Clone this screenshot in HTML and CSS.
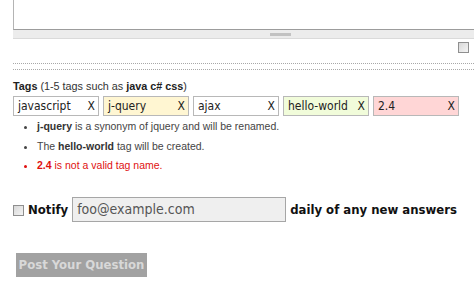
FILE: index.html
```html
<!DOCTYPE html>
<html lang="en">

<head>
  <meta charset="UTF-8" />
  <title>Ask Question</title>
  <link rel="stylesheet" href="styles.css">
</head>

<body>
  <div class="page">

    <div class="editor">
      <textarea class="editor-input"></textarea>
      <div class="grippie"><span class="grip-handle"></span></div>
    </div>

    <div class="options">
      <input type="checkbox" class="box small-box">
    </div>

    <div class="preview"></div>

    <p class="tags-label"><strong>Tags</strong> (1-5 tags such as <strong>java c# css</strong>)</p>

    <div class="tag-row">
      <div class="tag">javascript<span class="tag-x">X</span></div>
      <div class="tag tag-synonym">j-query<span class="tag-x">X</span></div>
      <div class="tag">ajax<span class="tag-x">X</span></div>
      <div class="tag tag-new">hello-world<span class="tag-x">X</span></div>
      <div class="tag tag-invalid">2.4<span class="tag-x">X</span></div>
    </div>

    <ul class="tag-notes">
      <li><strong>j-query</strong> is a synonym of jquery and will be renamed.</li>
      <li>The <strong>hello-world</strong> tag will be created.</li>
      <li class="note-error"><strong>2.4</strong> is not a valid tag name.</li>
    </ul>

    <div class="notify-row">
      <input type="checkbox" class="box">
      <span class="notify-text">Notify</span>
      <input type="text" class="email" value="foo@example.com">
      <span class="notify-text">daily of any new answers</span>
    </div>

    <button class="post-btn" disabled>Post Your Question</button>

  </div>
</body>

</html>
```

FILE: styles.css
```css
body {
  margin: 0;
  overflow: hidden;
  background: white;
  font-family: "Liberation Sans", Arial, sans-serif;
  color: #222;
}

.page {
  padding-left: 13px;
}

/* textarea with its resize grip, cut off at the right edge */
.editor-input {
  display: block;
  box-sizing: border-box;
  width: 100%;
  height: 30px;
  margin: 0;
  border: 1px solid #b4b4b4;
  border-top: 0;
  border-right: 0;
  border-bottom-color: #9c9c9c;
  resize: none;
  background: white;
}

.grippie {
  height: 8px;
  background: #ececec;
  border-bottom: 1px solid #dadada;
  display: flex;
  justify-content: center;
  align-items: center;
}

.grip-handle {
  width: 21px;
  height: 3px;
  margin-left: 74px;
  background: #c2c2c2;
}

.options {
  display: flex;
  justify-content: flex-end;
  padding-right: 5px;
  margin-top: 3px;
}

.box {
  appearance: none;
  -webkit-appearance: none;
  box-sizing: border-box;
  width: 11px;
  height: 11px;
  margin: 0;
  border: 1px solid #8f8f8f;
  background: linear-gradient(135deg, #d8d8d8, #f4f4f4);
}

.preview {
  margin-top: 10px;
  height: 5px;
  border-top: 1px dotted #a8a8a8;
  border-bottom: 1px dotted #a8a8a8;
}

.tags-label {
  margin: 9px 0 0;
  font-size: 10.8px;
  line-height: 14px;
  color: #333;
}

.tags-label strong {
  color: #222;
}

.tag-row {
  display: flex;
  gap: 4px;
  margin-top: 3px;
}

.tag {
  box-sizing: border-box;
  width: 86px;
  height: 20px;
  display: flex;
  justify-content: space-between;
  align-items: center;
  padding: 0 3px 0 4px;
  border: 1px solid #b8b8b8;
  background: white;
  font-family: "DejaVu Sans Condensed", "DejaVu Sans", sans-serif;
  font-size: 12px;
  color: #222;
}

.tag-x {
  font-size: 12px;
}

.tag-synonym {
  background: #fff6d2;
}

.tag-new {
  background: #f1fcda;
}

.tag-invalid {
  background: #ffd6d6;
}

.tag-notes {
  margin: 1px 0 0;
  padding-left: 24px;
  font-size: 10.5px;
  line-height: 19.5px;
  color: #444;
}

.tag-notes strong {
  color: #333;
}

.tag-notes .note-error,
.tag-notes .note-error strong {
  color: #e01010;
}

.notify-row {
  display: flex;
  align-items: center;
  gap: 4px;
  margin-top: 21px;
}

.notify-row .box {
  margin-top: 2px;
}

.notify-text {
  font-family: "DejaVu Sans Condensed", "DejaVu Sans", sans-serif;
  font-weight: bold;
  font-size: 13px;
  color: #111;
}

.email {
  box-sizing: border-box;
  width: 214px;
  height: 25px;
  margin: 0;
  padding: 0 4px;
  border: 1px solid #a6a6a6;
  background: #efefef;
  font-family: "DejaVu Sans Condensed", "DejaVu Sans", sans-serif;
  font-size: 14px;
  color: #555;
}

.post-btn {
  display: block;
  margin: 31px 0 0 3px;
  width: 131px;
  height: 24px;
  padding: 0;
  border: none;
  background: #a2a2a2;
  color: #d8d8d8;
  font-family: "DejaVu Sans Condensed", "DejaVu Sans", sans-serif;
  font-weight: bold;
  font-size: 13px;
}
```
